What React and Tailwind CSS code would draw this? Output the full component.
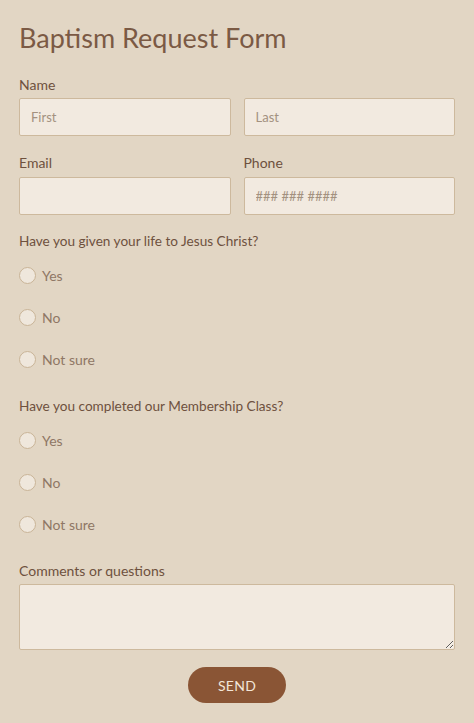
import { useState } from 'react';

const font = { fontFamily: 'Lato, "Open Sans", sans-serif' };

function Radio({ name, label, checked, onChange }) {
    return (
        <label className="flex items-center h-[42px] cursor-pointer">
            <span className="w-[17px] h-[17px] rounded-full border border-[#c9b497] bg-[#efe7dc] flex items-center justify-center">
                {checked && <span className="w-[8px] h-[8px] rounded-full bg-[#8a5535]"></span>}
            </span>
            <input type="radio" name={name} className="hidden" checked={checked} onChange={onChange} />
            <span className="ml-[6px] text-[14px] text-[#8f7765]">{label}</span>
        </label>
    );
}

function RadioGroup({ name }) {
    const [value, setValue] = useState('');
    return (
        <div>
            {['Yes', 'No', 'Not sure'].map(opt => (
                <Radio key={opt} name={name} label={opt} checked={value === opt} onChange={() => setValue(opt)} />
            ))}
        </div>
    );
}

export default function App() {
    const inputCls = 'w-full h-[38px] border border-[#cdb99d] bg-[#f2eae0] rounded-[2px] px-[11px] text-[13px] text-[#6d5241] placeholder-[#a3917f] outline-none';
    return (
        <div className="min-h-[723px] bg-[#e2d6c4] px-[19px] pt-[20px] pb-[20px]" style={font}>
            <h1 className="text-[27px] leading-[36px] text-[#7b5a44]">Baptism Request Form</h1>

            {/* Name */}
            <div className="mt-[19px] text-[14px] leading-[20px] text-[#6e513e]">Name</div>
            <div className="mt-[3px] grid grid-cols-2 gap-[13px]">
                <input className={inputCls} placeholder="First" />
                <input className={inputCls} placeholder="Last" />
            </div>

            {/* Email / Phone */}
            <div className="mt-[17px] grid grid-cols-2 gap-[13px]">
                <div>
                    <div className="text-[14px] leading-[20px] text-[#6e513e]">Email</div>
                    <input className={`${inputCls} mt-[4px]`} />
                </div>
                <div>
                    <div className="text-[14px] leading-[20px] text-[#6e513e]">Phone</div>
                    <input className={`${inputCls} mt-[4px]`} placeholder="### ### ####" />
                </div>
            </div>

            {/* Question 1 */}
            <div className="mt-[16px] text-[13.6px] leading-[20px] text-[#6e513e]">Have you given your life to Jesus Christ?</div>
            <div className="mt-[3px]">
                <RadioGroup name="jesus" />
            </div>

            {/* Question 2 */}
            <div className="mt-[16px] text-[13.6px] leading-[20px] text-[#6e513e]">Have you completed our Membership Class?</div>
            <div className="mt-[3px]">
                <RadioGroup name="membership" />
            </div>

            {/* Comments */}
            <div className="mt-[16px] text-[14px] leading-[20px] text-[#6e513e]">Comments or questions</div>
            <textarea className="mt-[3px] block w-full h-[66px] border border-[#cdb99d] bg-[#f2eae0] rounded-[2px] px-[11px] py-[8px] text-[13px] text-[#6d5241] outline-none"></textarea>

            <div className="mt-[17px] flex justify-center">
                <button className="w-[98px] h-[36px] rounded-full bg-[#8a5535] text-[#f3e6d8] text-[14px] tracking-[0.02em]">SEND</button>
            </div>
        </div>
    );
}
